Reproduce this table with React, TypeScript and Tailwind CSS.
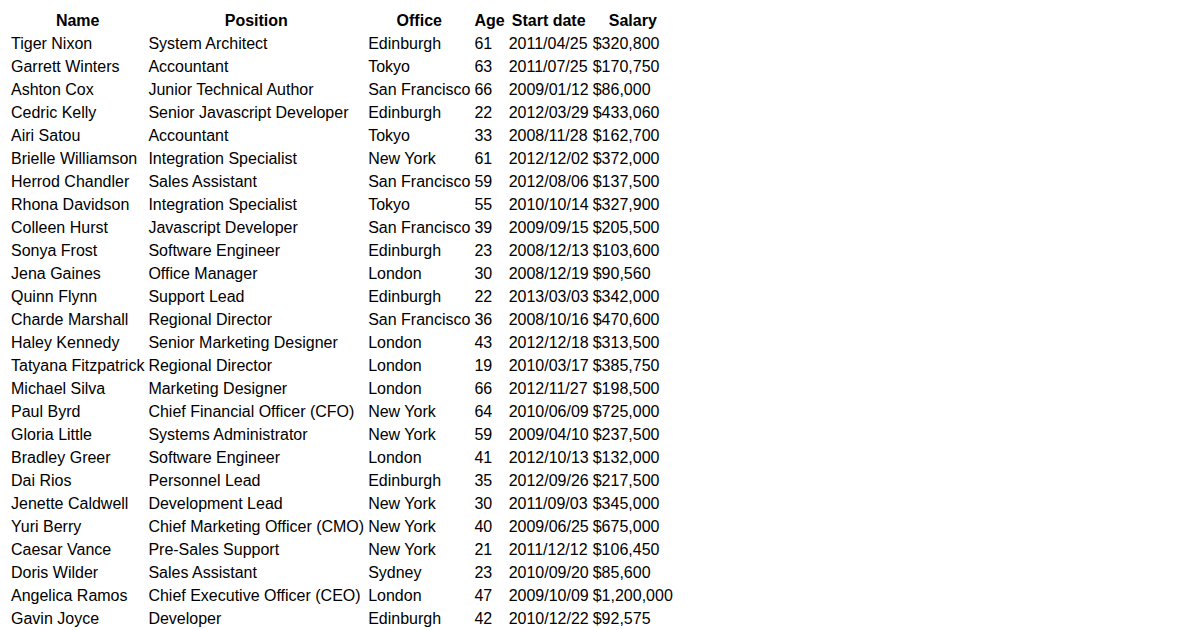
const rows: string[][] = [
  ["Tiger Nixon", "System Architect", "Edinburgh", "61", "2011/04/25", "$320,800"],
  ["Garrett Winters", "Accountant", "Tokyo", "63", "2011/07/25", "$170,750"],
  ["Ashton Cox", "Junior Technical Author", "San Francisco", "66", "2009/01/12", "$86,000"],
  ["Cedric Kelly", "Senior Javascript Developer", "Edinburgh", "22", "2012/03/29", "$433,060"],
  ["Airi Satou", "Accountant", "Tokyo", "33", "2008/11/28", "$162,700"],
  ["Brielle Williamson", "Integration Specialist", "New York", "61", "2012/12/02", "$372,000"],
  ["Herrod Chandler", "Sales Assistant", "San Francisco", "59", "2012/08/06", "$137,500"],
  ["Rhona Davidson", "Integration Specialist", "Tokyo", "55", "2010/10/14", "$327,900"],
  ["Colleen Hurst", "Javascript Developer", "San Francisco", "39", "2009/09/15", "$205,500"],
  ["Sonya Frost", "Software Engineer", "Edinburgh", "23", "2008/12/13", "$103,600"],
  ["Jena Gaines", "Office Manager", "London", "30", "2008/12/19", "$90,560"],
  ["Quinn Flynn", "Support Lead", "Edinburgh", "22", "2013/03/03", "$342,000"],
  ["Charde Marshall", "Regional Director", "San Francisco", "36", "2008/10/16", "$470,600"],
  ["Haley Kennedy", "Senior Marketing Designer", "London", "43", "2012/12/18", "$313,500"],
  ["Tatyana Fitzpatrick", "Regional Director", "London", "19", "2010/03/17", "$385,750"],
  ["Michael Silva", "Marketing Designer", "London", "66", "2012/11/27", "$198,500"],
  ["Paul Byrd", "Chief Financial Officer (CFO)", "New York", "64", "2010/06/09", "$725,000"],
  ["Gloria Little", "Systems Administrator", "New York", "59", "2009/04/10", "$237,500"],
  ["Bradley Greer", "Software Engineer", "London", "41", "2012/10/13", "$132,000"],
  ["Dai Rios", "Personnel Lead", "Edinburgh", "35", "2012/09/26", "$217,500"],
  ["Jenette Caldwell", "Development Lead", "New York", "30", "2011/09/03", "$345,000"],
  ["Yuri Berry", "Chief Marketing Officer (CMO)", "New York", "40", "2009/06/25", "$675,000"],
  ["Caesar Vance", "Pre-Sales Support", "New York", "21", "2011/12/12", "$106,450"],
  ["Doris Wilder", "Sales Assistant", "Sydney", "23", "2010/09/20", "$85,600"],
  ["Angelica Ramos", "Chief Executive Officer (CEO)", "London", "47", "2009/10/09", "$1,200,000"],
  ["Gavin Joyce", "Developer", "Edinburgh", "42", "2010/12/22", "$92,575"],
];

const headers = ["Name", "Position", "Office", "Age", "Start date", "Salary"];

export default function App() {
  return (
    <div className="m-2 bg-white text-black text-[16px] leading-[19px] font-['Liberation_Sans',Arial,sans-serif]">
      <table className="border-separate border-spacing-[2px]">
        <thead>
          <tr>
            {headers.map((h) => (
              <th key={h} className="p-[1px] font-bold text-center">
                {h}
              </th>
            ))}
          </tr>
        </thead>
        <tbody>
          {rows.map((r) => (
            <tr key={r[0]}>
              {r.map((c, i) => (
                <td key={i} className="p-[1px] text-left whitespace-nowrap">
                  {c}
                </td>
              ))}
            </tr>
          ))}
        </tbody>
      </table>
    </div>
  );
}
